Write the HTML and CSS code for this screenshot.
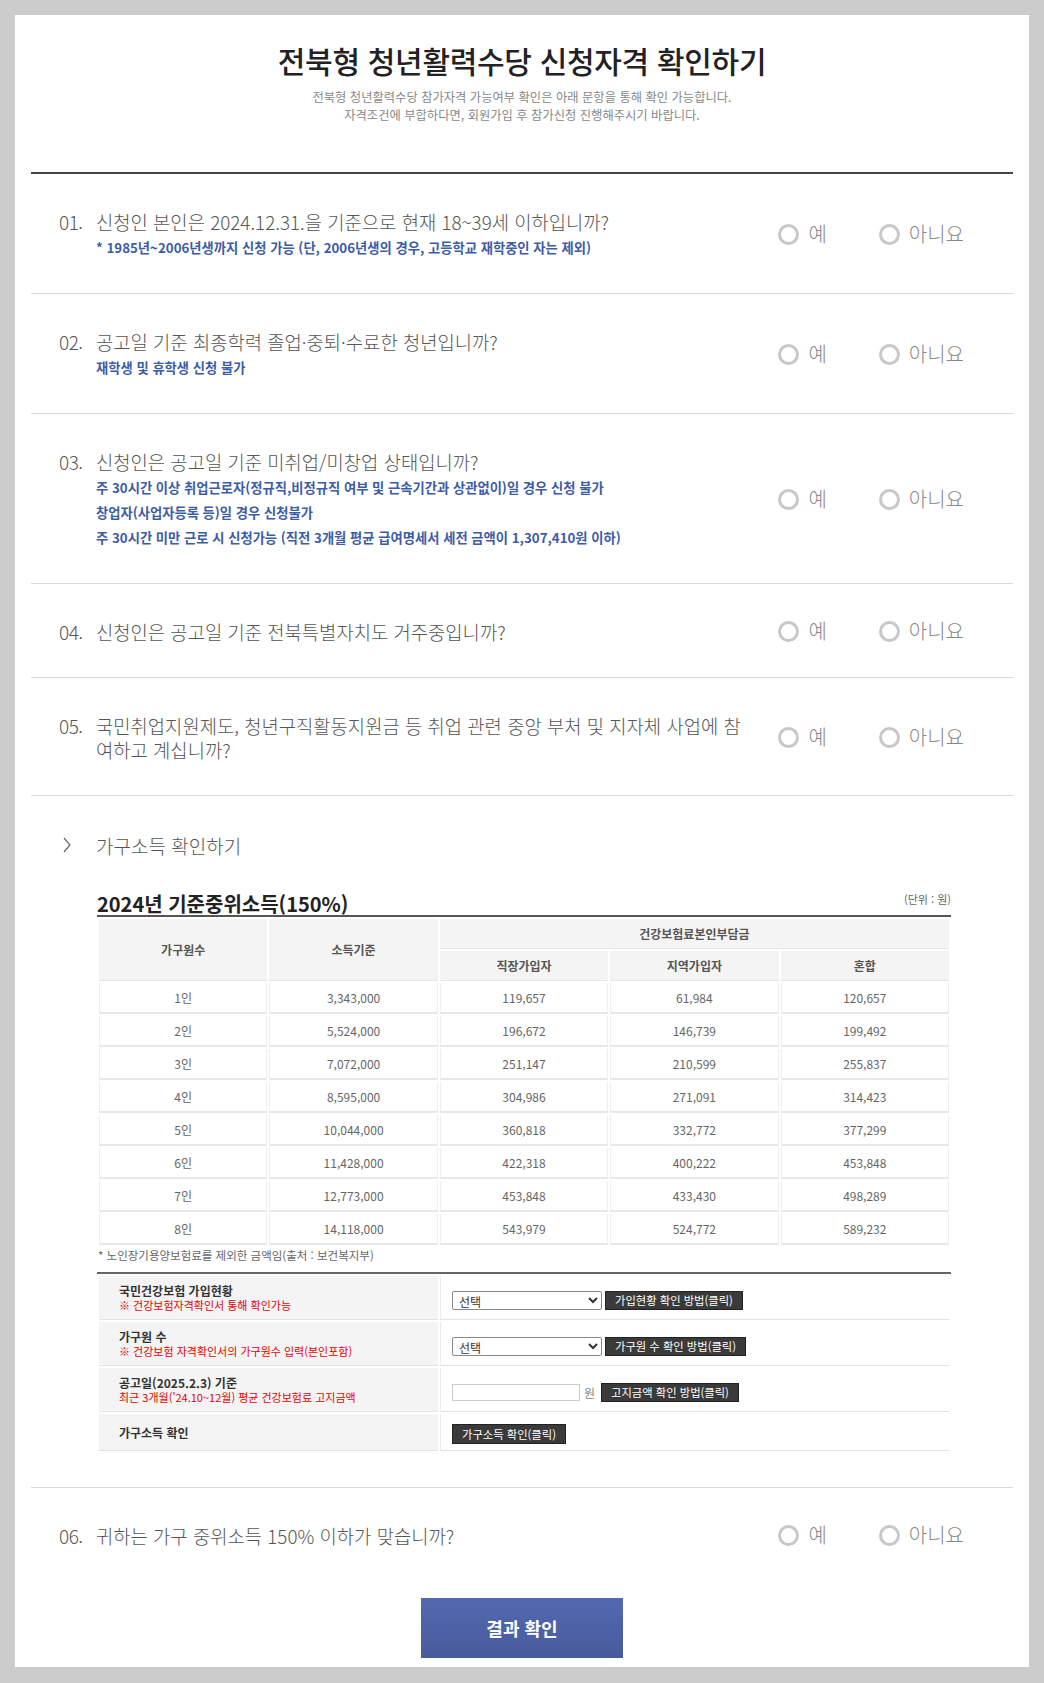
FILE: index.html
```html
<!DOCTYPE html>
<html lang="ko">
<head>
<meta charset="utf-8">
<title>전북형 청년활력수당 신청자격 확인하기</title>
<link rel="stylesheet" href="styles.css">
</head>
<body>
<div class="page">
  <header class="head">
    <h1 class="title">전북형 청년활력수당 신청자격 확인하기</h1>
    <p class="subtitle">전북형 청년활력수당 참가자격 가능여부 확인은 아래 문항을 통해 확인 가능합니다.<br>자격조건에 부합하다면, 회원가입 후 참가신청 진행해주시기 바랍니다.</p>
  </header>

  <div class="q">
    <div class="q-main">
      <span class="q-num">01.</span>
      <div class="q-body">
        <p class="q-text">신청인 본인은 2024.12.31.을 기준으로 현재 18~39세 이하입니까?</p>
        <p class="q-note">* 1985년~2006년생까지 신청 가능 (단, 2006년생의 경우, 고등학교 재학중인 자는 제외)</p>
      </div>
    </div>
    <div class="radios">
      <label class="radio"><input type="radio" name="q1"><span>예</span></label>
      <label class="radio"><input type="radio" name="q1"><span>아니요</span></label>
    </div>
  </div>

  <div class="q">
    <div class="q-main">
      <span class="q-num">02.</span>
      <div class="q-body">
        <p class="q-text">공고일 기준 최종학력 졸업·중퇴·수료한 청년입니까?</p>
        <p class="q-note">재학생 및 휴학생 신청 불가</p>
      </div>
    </div>
    <div class="radios">
      <label class="radio"><input type="radio" name="q2"><span>예</span></label>
      <label class="radio"><input type="radio" name="q2"><span>아니요</span></label>
    </div>
  </div>

  <div class="q">
    <div class="q-main">
      <span class="q-num">03.</span>
      <div class="q-body">
        <p class="q-text">신청인은 공고일 기준 미취업/미창업 상태입니까?</p>
        <p class="q-note">주 30시간 이상 취업근로자(정규직,비정규직 여부 및 근속기간과 상관없이)일 경우 신청 불가</p>
        <p class="q-note">창업자(사업자등록 등)일 경우 신청불가</p>
        <p class="q-note">주 30시간 미만 근로 시 신청가능 (직전 3개월 평균 급여명세서 세전 금액이 1,307,410원 이하)</p>
      </div>
    </div>
    <div class="radios">
      <label class="radio"><input type="radio" name="q3"><span>예</span></label>
      <label class="radio"><input type="radio" name="q3"><span>아니요</span></label>
    </div>
  </div>

  <div class="q">
    <div class="q-main">
      <span class="q-num">04.</span>
      <div class="q-body">
        <p class="q-text">신청인은 공고일 기준 전북특별자치도 거주중입니까?</p>
      </div>
    </div>
    <div class="radios">
      <label class="radio"><input type="radio" name="q4"><span>예</span></label>
      <label class="radio"><input type="radio" name="q4"><span>아니요</span></label>
    </div>
  </div>

  <div class="q">
    <div class="q-main">
      <span class="q-num">05.</span>
      <div class="q-body">
        <p class="q-text">국민취업지원제도, 청년구직활동지원금 등 취업 관련 중앙 부처 및 지자체 사업에 참여하고 계십니까?</p>
      </div>
    </div>
    <div class="radios">
      <label class="radio"><input type="radio" name="q5"><span>예</span></label>
      <label class="radio"><input type="radio" name="q5"><span>아니요</span></label>
    </div>
  </div>

  <section class="income">
    <div class="income-head">
      <svg class="chev" width="8" height="16" viewBox="0 0 8 16"><polyline points="1,1 7,8 1,15" fill="none" stroke="#666" stroke-width="1.2"/></svg>
      <span class="income-title">가구소득 확인하기</span>
    </div>

    <div class="income-inner">
      <div class="tbl-head">
        <h2 class="tbl-title">2024년 기준중위소득(150%)</h2>
        <span class="unit">(단위 : 원)</span>
      </div>
      <table class="tbl">
        <thead>
          <tr>
            <th rowspan="2">가구원수</th>
            <th rowspan="2">소득기준</th>
            <th colspan="3">건강보험료본인부담금</th>
          </tr>
          <tr>
            <th>직장가입자</th>
            <th>지역가입자</th>
            <th>혼합</th>
          </tr>
        </thead>
        <tbody>
          <tr><td>1인</td><td>3,343,000</td><td>119,657</td><td>61,984</td><td>120,657</td></tr>
          <tr><td>2인</td><td>5,524,000</td><td>196,672</td><td>146,739</td><td>199,492</td></tr>
          <tr><td>3인</td><td>7,072,000</td><td>251,147</td><td>210,599</td><td>255,837</td></tr>
          <tr><td>4인</td><td>8,595,000</td><td>304,986</td><td>271,091</td><td>314,423</td></tr>
          <tr><td>5인</td><td>10,044,000</td><td>360,818</td><td>332,772</td><td>377,299</td></tr>
          <tr><td>6인</td><td>11,428,000</td><td>422,318</td><td>400,222</td><td>453,848</td></tr>
          <tr><td>7인</td><td>12,773,000</td><td>453,848</td><td>433,430</td><td>498,289</td></tr>
          <tr><td>8인</td><td>14,118,000</td><td>543,979</td><td>524,772</td><td>589,232</td></tr>
        </tbody>
      </table>
      <p class="foot">* 노인장기용양보험료를 제외한 금액임(출처 : 보건복지부)</p>

      <table class="form">
        <tbody>
          <tr>
            <th><strong>국민건강보험 가입현황</strong><em>※ 건강보험자격확인서 통해 확인가능</em></th>
            <td><select class="sel"><option>선택</option></select><button type="button" class="btn-dark">가입현황 확인 방법(클릭)</button></td>
          </tr>
          <tr>
            <th><strong>가구원 수</strong><em>※ 건강보험 자격확인서의 가구원수 입력(본인포함)</em></th>
            <td><select class="sel"><option>선택</option></select><button type="button" class="btn-dark">가구원 수 확인 방법(클릭)</button></td>
          </tr>
          <tr>
            <th><strong>공고일(2025.2.3) 기준</strong><em>최근 3개월('24.10~12월) 평균 건강보험료 고지금액</em></th>
            <td><input type="text" class="txt"><span class="won">원</span><button type="button" class="btn-dark">고지금액 확인 방법(클릭)</button></td>
          </tr>
          <tr class="last">
            <th><strong>가구소득 확인</strong></th>
            <td><button type="button" class="btn-dark btn-tall">가구소득 확인(클릭)</button></td>
          </tr>
        </tbody>
      </table>
    </div>
  </section>

  <div class="q q-last">
    <div class="q-main">
      <span class="q-num">06.</span>
      <div class="q-body">
        <p class="q-text">귀하는 가구 중위소득 150% 이하가 맞습니까?</p>
      </div>
    </div>
    <div class="radios">
      <label class="radio"><input type="radio" name="q6"><span>예</span></label>
      <label class="radio"><input type="radio" name="q6"><span>아니요</span></label>
    </div>
  </div>

  <div class="submit-wrap">
    <button type="button" class="submit">결과 확인</button>
  </div>
</div>
</body>
</html>
```
FILE: styles.css
```css
* { box-sizing: border-box; }
html, body { margin: 0; padding: 0; }
body {
  background: #cccccc;
  padding: 15px;
  font-family: "Noto Sans CJK KR", "Noto Sans", sans-serif;
  color: #555;
}
p, h1, h2 { margin: 0; }

.page {
  background: #fff;
  width: 1014px;
  padding: 0 16px 9px;
}

/* header */
.head {
  padding-top: 25px;
  text-align: center;
  border-bottom: 2px solid #444;
  padding-bottom: 48px;
}
.title {
  font-size: 30px;
  line-height: 40px;
  font-weight: 500;
  color: #222;
  letter-spacing: -0.3px;
}
.subtitle {
  margin-top: 8px;
  font-size: 12.3px;
  line-height: 18px;
  color: #888;
}

/* question rows */
.q {
  display: flex;
  align-items: center;
  justify-content: space-between;
  padding: 36px 0 33px 28px;
  border-bottom: 1px solid #d9d9d9;
}
.q-main { display: flex; align-items: flex-start; }
.q-num {
  width: 37px;
  flex: none;
  font-size: 19px;
  line-height: 24px;
  font-weight: 300;
  color: #555;
  letter-spacing: -0.5px;
}
.q-body { width: 660px; }
.q-text {
  font-size: 18.8px;
  line-height: 24px;
  font-weight: 300;
  color: #555;
  word-break: break-all;
}
.q-note {
  margin-top: 1px;
  font-size: 13.3px;
  line-height: 25px;
  font-weight: 700;
  color: #3d5ca8;
}
.q-note + .q-note { margin-top: 0; }

.radios {
  display: flex;
  align-items: center;
  gap: 52px;
  margin-right: 49px;
  margin-top: -2px;
}
.radio {
  display: flex;
  align-items: center;
  gap: 9px;
  font-size: 20px;
  line-height: 24px;
  font-weight: 300;
  color: #888;
}
.radio input {
  appearance: none;
  -webkit-appearance: none;
  margin: 0;
  width: 21px;
  height: 21px;
  border: 3px solid #c8c8c8;
  border-radius: 50%;
  background: #fff;
}

/* income section */
.income {
  padding: 36px 0 34px;
  border-bottom: 1px solid #d9d9d9;
}
.income-head {
  display: flex;
  align-items: center;
  padding-left: 28px;
  height: 26px;
}
.chev { width: 8px; height: 16px; margin-left: 4px; margin-right: 25px; }
.income-title {
  font-size: 19px;
  font-weight: 300;
  color: #555;
}
.income-inner {
  margin: 33px 62px 0 66px;
}
.tbl-head {
  display: flex;
  justify-content: space-between;
  align-items: center;
  height: 26px;
  border-bottom: 2px solid #555;
}
.tbl-title {
  font-size: 20px;
  font-weight: 700;
  color: #222;
}
.unit {
  font-size: 11px;
  color: #666;
  margin-top: -8px;
}

.tbl {
  width: 100%;
  border-collapse: separate;
  border-spacing: 2px;
  table-layout: fixed;
}
.tbl th {
  background: #f4f4f4;
  font-size: 12px;
  font-weight: 700;
  color: #555;
  border-bottom: 1px solid #e4e4e4;
  height: 30px;
}
.tbl td {
  height: 31px;
  text-align: center;
  font-size: 12px;
  color: #666;
  border-bottom: 2px solid #e8e8e8;
  border-left: 1px solid #eeeeee;
  border-right: 1px solid #eeeeee;
}
.foot {
  font-size: 11.5px;
  line-height: 18px;
  color: #666;
  margin-top: -1px;
  padding-left: 1px;
}

.form {
  width: 100%;
  margin-top: 8px;
  border-top: 2px solid #666;
  border-collapse: separate;
  border-spacing: 2px 2px;
}
.form th {
  width: 339px;
  background: #f4f4f4;
  text-align: left;
  padding: 0 0 0 20px;
  height: 44px;
  font-weight: normal;
  border-bottom: 1px solid #e2e2e2;
}
.form th strong {
  display: block;
  font-size: 12px;
  line-height: 15px;
  font-weight: 700;
  color: #333;
}
.form th em {
  display: block;
  font-style: normal;
  font-size: 11px;
  line-height: 15px;
  color: #e60000;
}
.form td {
  padding: 0 0 0 11px;
  border-bottom: 1px solid #e2e2e2;
  border-left: 1px solid #ececec;
}
.form tr.last th, .form tr.last td { height: 37px; }

.sel {
  width: 150px;
  height: 19px;
  font-size: 12px;
  font-family: inherit;
  color: #333;
  border: 1px solid #888;
  border-radius: 2px;
  padding: 0 2px;
  vertical-align: middle;
  background: #fff;
}
.txt {
  width: 128px;
  height: 17px;
  border: 1px solid #ccc;
  vertical-align: middle;
  margin: 0;
}
.won {
  font-size: 12px;
  color: #888;
  margin: 0 3px 0 4px;
  vertical-align: middle;
}
.btn-dark {
  height: 19px;
  margin-left: 3px;
  padding: 0 9px;
  border: 1px solid #222;
  background: #3a3a3a;
  color: #fff;
  font-family: inherit;
  font-size: 11.3px;
  line-height: 17px;
  vertical-align: middle;
}
.btn-tall { height: 20px; margin-left: 0; }

.q-last { border-bottom: none; }

.submit-wrap {
  display: flex;
  justify-content: center;
  padding-top: 17px;
}
.submit {
  width: 202px;
  height: 60px;
  border: none;
  background: linear-gradient(#5468b0, #475b9c);
  color: #fff;
  font-family: inherit;
  font-size: 18px;
  font-weight: 700;
}
```
